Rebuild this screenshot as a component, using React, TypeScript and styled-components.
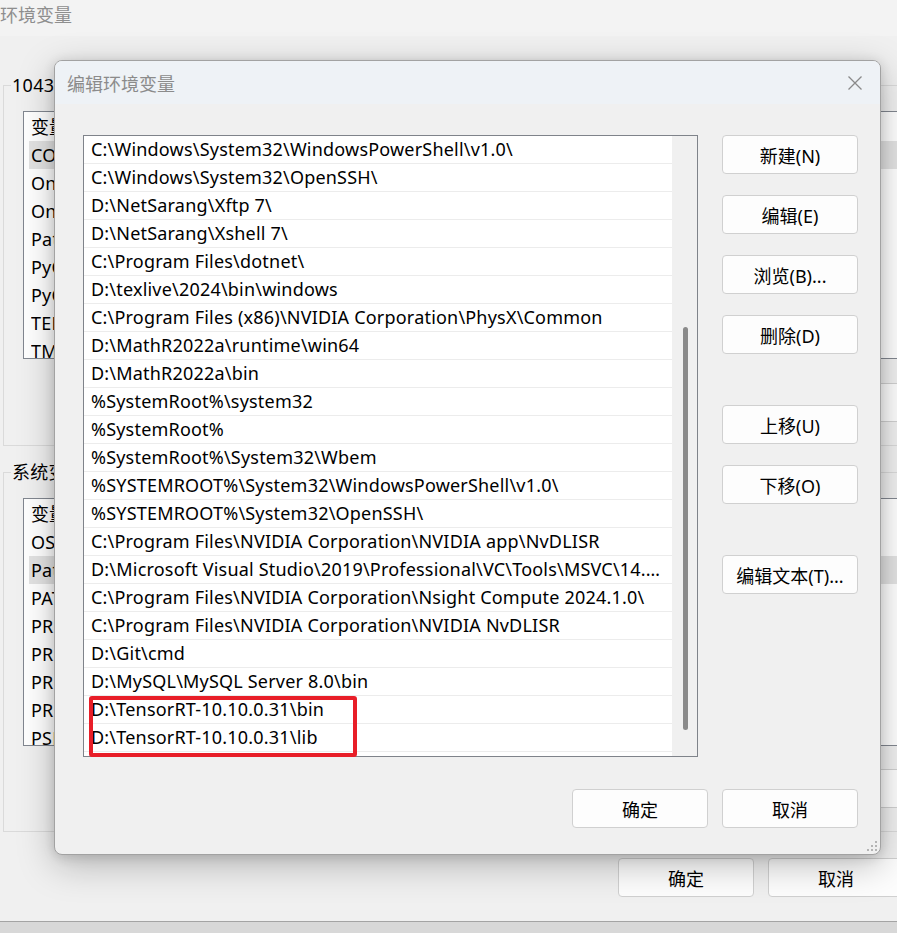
import React from "react";
import styled, { createGlobalStyle } from "styled-components";

const GlobalStyle = createGlobalStyle`
  html, body { margin: 0; padding: 0; }
  body {
    font-family: "Noto Sans", "Noto Sans CJK SC", sans-serif;
    -webkit-font-smoothing: antialiased;
  }
  * { box-sizing: border-box; }
`;

const Page = styled.div`
  position: relative;
  width: 897px;
  height: 933px;
  overflow: hidden;
  background: #d8d8d8;
`;

/* ---------- background window (环境变量) ---------- */
const BgWindow = styled.div`
  width: 928px;
  height: 922px;
  background: #f0f0f0;
  border-bottom: 1px solid #a4a4a4;
  display: flex;
  flex-direction: column;
`;

const BgTitle = styled.div`
  height: 36px;
  background: #f3f3f3;
  font-size: 18px;
  line-height: 28px;
  color: #8e8e8e;
  font-family: "Noto Sans CJK SC", sans-serif;
`;

const BgBody = styled.div`
  display: flex;
  flex-direction: column;
  padding: 0 0 0 3px;
`;

const Group = styled.fieldset<{ $top: number }>`
  margin: ${(p) => p.$top}px 0 0 0;
  border: 1px solid #dadada;
  padding: 14px 20px 23px 19px;
  min-width: 0;
  display: flex;
  flex-direction: column;
`;

const Legend = styled.legend`
  margin-left: -12px;
  padding: 0 1px;
  font-size: 18px;
  line-height: 24px;
  color: #000;
  white-space: nowrap;
  letter-spacing: 0.3px;
`;

const BgList = styled.div<{ $h: number }>`
  height: ${(p) => p.$h}px;
  background: #fff;
  border: 1px solid #828790;
  display: flex;
  flex-direction: column;
  overflow: hidden;
`;

const BgHeader = styled.div`
  height: 30px;
  padding: 1px 0 0 7px;
  font-size: 18px;
  line-height: 28px;
  color: #000;
  display: flex;
`;

const BgRow = styled.div<{ $sel?: boolean }>`
  height: 28px;
  margin-left: 5px;
  padding-left: 2px;
  font-size: 18px;
  line-height: 28px;
  letter-spacing: 0.2px;
  color: #000;
  background: ${(p) => (p.$sel ? "#e3e3e3" : "transparent")};
  display: flex;
  white-space: nowrap;
`;

const NameCol = styled.span`
  width: 260px;
  overflow: hidden;
`;

const BgButtons = styled.div<{ $top: number }>`
  display: flex;
  justify-content: flex-end;
  gap: 14px;
  margin-top: ${(p) => p.$top}px;
`;

const BgFooter = styled.div`
  display: flex;
  justify-content: flex-end;
  gap: 14px;
  margin-top: 26px;
  padding-right: 24px;
`;

/* ---------- buttons ---------- */
const Button = styled.button<{ $gapBefore?: number }>`
  width: 136px;
  height: 39px;
  margin: ${(p) => p.$gapBefore ?? 0}px 0 0 0;
  padding: 0;
  background: #fdfdfd;
  border: 1px solid #d0d0d0;
  border-radius: 4px;
  font-family: "Noto Sans", "Noto Sans CJK SC", sans-serif;
  font-size: 18px;
  color: #000;
  flex-shrink: 0;
`;

/* ---------- front dialog (编辑环境变量) ---------- */
const Dialog = styled.div`
  position: absolute;
  left: 54px;
  top: 60px;
  width: 827px;
  height: 795px;
  background: #f0f0f0;
  border: 1px solid #a2a2a2;
  border-radius: 8px;
  overflow: hidden;
  display: flex;
  flex-direction: column;
  box-shadow: 0 10px 36px rgba(0, 0, 0, 0.25), 0 2px 12px rgba(0, 0, 0, 0.14);
`;

const TitleBar = styled.div`
  height: 43px;
  background: #eef2f6;
  display: flex;
  align-items: center;
  justify-content: space-between;
  flex-shrink: 0;
`;

const Title = styled.div`
  padding-left: 12px;
  font-family: "Noto Sans CJK SC", sans-serif;
  font-size: 18px;
  color: #8b8b8b;
  padding-top: 1px;
`;

const CloseBtn = styled.div`
  width: 50px;
  height: 43px;
  display: flex;
  align-items: center;
  justify-content: center;
`;

const Body = styled.div`
  display: flex;
  gap: 24px;
  padding: 31px 22px 0 28px;
`;

const List = styled.div`
  position: relative;
  width: 615px;
  height: 622px;
  background: #fff;
  border: 1px solid #7f838a;
  display: flex;
  flex-shrink: 0;
`;

const Rows = styled.div`
  flex: 1;
  min-width: 0;
  overflow: hidden;
  display: flex;
  flex-direction: column;
`;

const Row = styled.div`
  height: 28px;
  flex-shrink: 0;
  border-bottom: 1px solid #ececec;
  padding-left: 7px;
  font-size: 18px;
  line-height: 27px;
  letter-spacing: 0.2px;
  color: #000;
  white-space: nowrap;
  overflow: hidden;
  text-overflow: ellipsis;
`;

const Track = styled.div<{ $offset: number }>`
  width: 25px;
  background: #f0f0f0;
  padding: ${(p) => p.$offset}px 0 0 11px;
  flex-shrink: 0;
`;

const Thumb = styled.div<{ $h: number }>`
  width: 5px;
  height: ${(p) => p.$h}px;
  border-radius: 3px;
  background: #8a8a8a;
`;

const Highlight = styled.div`
  position: absolute;
  left: 5px;
  top: 560px;
  width: 268px;
  height: 61px;
  border: 4px solid #e81e28;
  border-radius: 3px;
  pointer-events: none;
`;

const SideButtons = styled.div`
  display: flex;
  flex-direction: column;
  width: 136px;
`;

const Footer = styled.div`
  display: flex;
  justify-content: flex-end;
  gap: 14px;
  margin-top: 32px;
  padding-right: 22px;
`;

const Grip = styled.svg`
  position: absolute;
  right: 2px;
  bottom: 2px;
`;

const paths = [
  "C:\\Windows\\System32\\WindowsPowerShell\\v1.0\\",
  "C:\\Windows\\System32\\OpenSSH\\",
  "D:\\NetSarang\\Xftp 7\\",
  "D:\\NetSarang\\Xshell 7\\",
  "C:\\Program Files\\dotnet\\",
  "D:\\texlive\\2024\\bin\\windows",
  "C:\\Program Files (x86)\\NVIDIA Corporation\\PhysX\\Common",
  "D:\\MathR2022a\\runtime\\win64",
  "D:\\MathR2022a\\bin",
  "%SystemRoot%\\system32",
  "%SystemRoot%",
  "%SystemRoot%\\System32\\Wbem",
  "%SYSTEMROOT%\\System32\\WindowsPowerShell\\v1.0\\",
  "%SYSTEMROOT%\\System32\\OpenSSH\\",
  "C:\\Program Files\\NVIDIA Corporation\\NVIDIA app\\NvDLISR",
  "D:\\Microsoft Visual Studio\\2019\\Professional\\VC\\Tools\\MSVC\\14.…",
  "C:\\Program Files\\NVIDIA Corporation\\Nsight Compute 2024.1.0\\",
  "C:\\Program Files\\NVIDIA Corporation\\NVIDIA NvDLISR",
  "D:\\Git\\cmd",
  "D:\\MySQL\\MySQL Server 8.0\\bin",
  "D:\\TensorRT-10.10.0.31\\bin",
  "D:\\TensorRT-10.10.0.31\\lib",
];

const userVars = ["CONDA_HOME", "OneDrive", "OneDriveConsumer", "Path", "PyCharm", "PyCharm Community Edition", "TEMP", "TMP"];
const sysVars = ["OS", "Path", "PATHEXT", "PROCESSOR_ARCHITECTURE", "PROCESSOR_IDENTIFIER", "PROCESSOR_LEVEL", "PROCESSOR_REVISION", "PSModulePath"];

function VarList({ names, selected }: { names: string[]; selected: number }) {
  return (
    <BgList $h={248}>
      <BgHeader>
        <NameCol>变量</NameCol>
        <span>值</span>
      </BgHeader>
      {names.map((n, i) => (
        <BgRow key={n} $sel={i === selected}>
          <NameCol>{n}</NameCol>
        </BgRow>
      ))}
    </BgList>
  );
}

export default function App() {
  return (
    <>
      <GlobalStyle />
      <Page>
        <BgWindow>
          <BgTitle>环境变量</BgTitle>
          <BgBody>
            <Group $top={37}>
              <Legend>10433 的用户变量(U)</Legend>
              <VarList names={userVars} selected={0} />
              <BgButtons $top={24}>
                <Button>新建(N)...</Button>
                <Button>编辑(E)...</Button>
                <Button>删除(D)</Button>
              </BgButtons>
            </Group>
            <Group $top={14}>
              <Legend>系统变量(S)</Legend>
              <VarList names={sysVars} selected={1} />
              <BgButtons $top={23}>
                <Button>新建(W)...</Button>
                <Button>编辑(I)...</Button>
                <Button>删除(L)</Button>
              </BgButtons>
            </Group>
          </BgBody>
          <BgFooter>
            <Button>确定</Button>
            <Button>取消</Button>
          </BgFooter>
        </BgWindow>

        <Dialog>
          <TitleBar>
            <Title>编辑环境变量</Title>
            <CloseBtn>
              <svg width="16" height="16" viewBox="0 0 16 16">
                <path d="M1.5 1.5 L14.5 14.5 M14.5 1.5 L1.5 14.5" stroke="#8a8a8a" strokeWidth="1.3" fill="none" />
              </svg>
            </CloseBtn>
          </TitleBar>
          <Body>
            <List>
              <Rows>
                {paths.map((p) => (
                  <Row key={p}>{p}</Row>
                ))}
              </Rows>
              <Track $offset={191}>
                <Thumb $h={403} />
              </Track>
              <Highlight />
            </List>
            <SideButtons>
              <Button>新建(N)</Button>
              <Button $gapBefore={21}>编辑(E)</Button>
              <Button $gapBefore={21}>浏览(B)...</Button>
              <Button $gapBefore={21}>删除(D)</Button>
              <Button $gapBefore={51}>上移(U)</Button>
              <Button $gapBefore={21}>下移(O)</Button>
              <Button $gapBefore={51}>编辑文本(T)...</Button>
            </SideButtons>
          </Body>
          <Footer>
            <Button>确定</Button>
            <Button>取消</Button>
          </Footer>
          <Grip width="12" height="12" viewBox="0 0 12 12">
            <rect x="9" y="1" width="2" height="2" fill="#b4b4b4" />
            <rect x="5" y="5" width="2" height="2" fill="#b4b4b4" />
            <rect x="9" y="5" width="2" height="2" fill="#b4b4b4" />
            <rect x="1" y="9" width="2" height="2" fill="#b4b4b4" />
            <rect x="5" y="9" width="2" height="2" fill="#b4b4b4" />
            <rect x="9" y="9" width="2" height="2" fill="#b4b4b4" />
          </Grip>
        </Dialog>
      </Page>
    </>
  );
}
